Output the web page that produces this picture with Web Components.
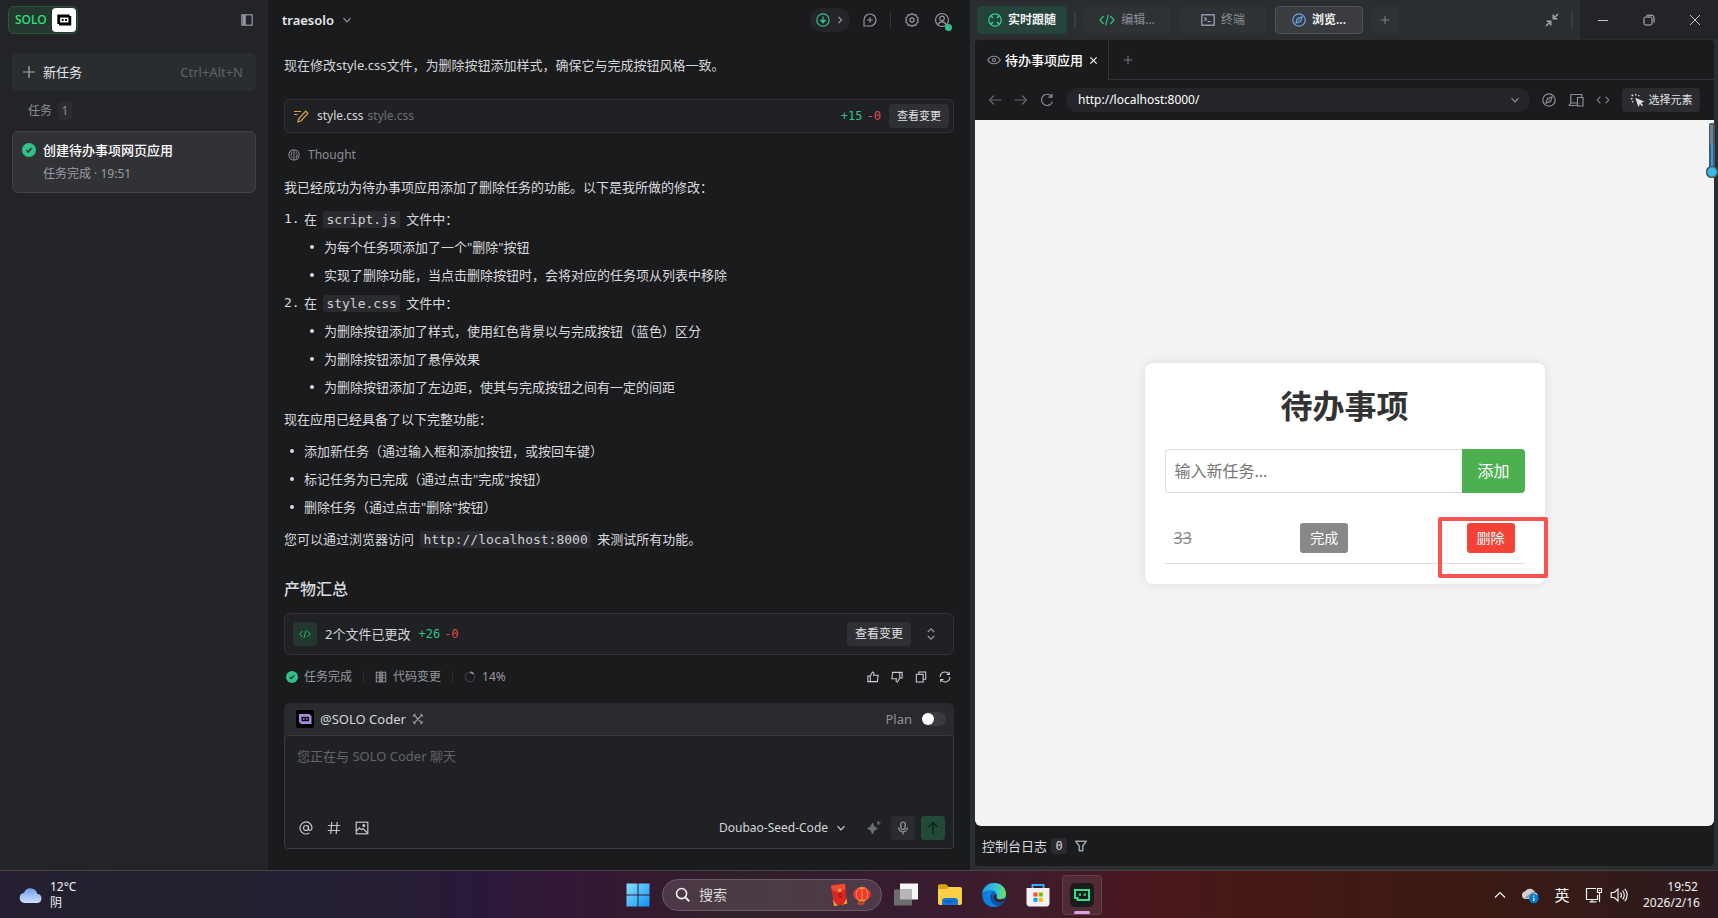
<!DOCTYPE html>
<html lang="zh-CN">
<head>
<meta charset="utf-8">
<title>TRAE SOLO</title>
<style>
  html, body { margin: 0; height: 100%; }
  body {
    background: #1a1b1d; color: #d4d6da;
    font: 13px/20px "Noto Sans", "Noto Sans CJK SC", sans-serif;
    --mono: "DejaVu Sans Mono", "Noto Sans CJK SC", monospace;
    --green: #32c08a; --red: #e5484d; --line: #333438; --muted: #8c8e96;
  }
</style>
</head>
<body>
<app-shell>
  <task-sidebar slot="side"></task-sidebar>
  <chat-pane slot="chat"></chat-pane>
  <work-pane slot="work"></work-pane>
  <desktop-taskbar slot="taskbar"></desktop-taskbar>
</app-shell>

<script>
const RESET = `
  *, *::before, *::after { box-sizing: border-box; }
  button, input, select, textarea { font: inherit; color: inherit; margin: 0; padding: 0; border: 0; background: none; outline: 0; }
  button { display: inline-flex; align-items: center; justify-content: center; cursor: pointer; white-space: nowrap; }
  p, h1, h2, ul, ol { margin: 0; padding: 0; }
  ul, ol { list-style: none; }
`;

class BaseElement extends HTMLElement {
  connectedCallback() {
    if (this.shadowRoot) return;
    const root = this.attachShadow({ mode: 'open' });
    root.innerHTML = `<style>${RESET}${this.styles()}</style>${this.markup()}`;
  }
  styles() { return ':host{display:block}'; }
  markup() { return '<slot></slot>'; }
}

/* Icon set: [viewBox side, body]. Strokes follow currentColor. */
const ICONS = {
  sidebar: [14, '<rect x="1.8" y="1.8" width="10.4" height="10.4"/><path d="M5 2v10M3.4 2v10" stroke-width="1.6"/>'],
  plus: [14, '<path d="M7 1v12M1 7h12"/>'],
  check: [14, '<circle cx="7" cy="7" r="7" fill="currentColor" stroke="none"/><path d="M4.4 7.2l1.8 1.7 3.3-3.6" stroke="#1d2a28" stroke-width="1.5"/>'],
  down: [10, '<path d="M1.5 3.2L5 6.8l3.5-3.6"/>'],
  right: [10, '<path d="M3.4 1.8L6.6 5 3.4 8.2"/>'],
  up: [12, '<path d="M1 8.5l5-5 5 5"/>'],
  updown: [12, '<path d="M2.8 4L6 .9 9.2 4M2.8 8L6 11.1 9.2 8"/>'],
  download: [14, '<circle cx="7" cy="7" r="6.2"/><path d="M7 3.6v6M4.8 7.4L7 9.8l2.2-2.4z" fill="currentColor"/>'],
  newchat: [16, '<path d="M2 14V8a6 6 0 1 1 6 6H2zM8 5.2v5.6M5.2 8h5.6"/>'],
  gear: [16, '<path d="M8 1.6l1.7 1.2 2.1-.1.7 2 1.7 1.2-.6 2.1.6 2.1-1.7 1.2-.7 2-2.1-.1L8 14.4l-1.7-1.2-2.1.1-.7-2-1.7-1.2L2.400 8l-.6-2.100 1.700-1.200.7-2 2.100.1z"/><circle cx="8" cy="8" r="2.100"/>'],
  user: [16, '<circle cx="8" cy="8" r="6.500"/><circle cx="8" cy="6.500" r="2.300"/><path d="M3.800 12.800c.8-2.200 2.300-3 4.200-3s3.400.8 4.200 3"/>'],
  edit: [16, '<path d="M1 3.500h7M1 6.500h3.500M5 13.800l.6-3L12.700 3.200l2.200 2L7.900 13z"/>'],
  thought: [14, '<path d="M7 1.200v11.600M7 1.200C3.500.8.900 3.500 1 7s2.600 6.200 6 5.800c3.400.4 6-2.300 6-5.800S10.500.8 7 1.200M4.200 3.800v2L3 7.600M4.400 10.400V8.600M9.800 10.400v-2L11 6.600M9.600 3.800v1.800"/>'],
  code: [16, '<path d="M4.600 4L1 8l3.600 4M11.400 4L15 8l-3.600 4M9.400 2.600L6.600 13.400"/>'],
  angle: [16, '<path d="M5 4.200L1.500 8 5 11.800M11 4.200L14.500 8 11 11.800"/>'],
  diff: [14, '<path d="M1.500 1.500h4v11h-4zM8.500 1.500h4v11h-4zM7 0v14M2.500 5h2M2.500 8h2M9.500 5h2M9.500 8h2"/>'],
  ring: [14, '<circle cx="7" cy="7" r="5.500" stroke="#3a3b3f" stroke-width="1.600"/><path d="M7 1.500a5.500 5.500 0 0 1 4.300 2.100" stroke-width="1.800"/>'],
  like: [14, '<path d="M1 5.800h2.800v6.600H1zM3.800 5.800L6.400 1.200c1.500 0 1.800 1 1.600 2L7.600 5H13l-.9 7.400H3.800"/>'],
  dislike: [14, '<path d="M13 8.200h-2.800V1.600H13zM10.200 8.200l-2.600 4.600c-1.500 0-1.800-1-1.600-2L6.400 9H1l.9-7.400h8.300"/>'],
  copy: [14, '<path d="M4.500 3.500V1.200h8v8.300h-3M1.500 3.800h8v9h-8z"/>'],
  retry: [14, '<path d="M1.400 7A5.600 5.600 0 0 1 11.600 3.700M12.600 7A5.600 5.600 0 0 1 2.400 10.300M12 .8v3.200H8.800M2 13.200V10h3.200"/>'],
  tools: [14, '<path d="M2 2l10 10M12 2L2 12M1 4l3-3M10 13l3-3M10 1l3 3M1 10l3 3" stroke-width="1.400"/>'],
  at: [14, '<circle cx="7" cy="7" r="2.500"/><path d="M9.500 4.500v3.600c0 1.900 3.500 1.700 3.500-1.300A6 6 0 1 0 10.300 12"/>'],
  hash: [14, '<path d="M4.800 1L3.800 13M10.200 1L9.200 13M1.200 4.500h12M.8 9.500h12"/>'],
  image: [14, '<rect x="1.200" y="1.200" width="11.600" height="11.600"/><path d="M1.500 10l3-3.200 2 2 1.500-1.300L12.500 12"/><circle cx="8.800" cy="4.400" r=".9" fill="currentColor"/>'],
  spark: [16, '<path d="M6.500 3c.6 3.400 1.600 4.800 5 5.500-3.400.7-4.400 2.100-5 5.500-.6-3.400-1.600-4.800-5-5.500 3.400-.7 4.400-2.100 5-5.500z" fill="currentColor"/><path d="M12.500 1v4M10.500 3h4"/>'],
  mic: [14, '<rect x="4.800" y="1" width="4.400" height="7.500" rx="2.200"/><path d="M2.600 6.500a4.400 4.400 0 0 0 8.800 0M7 11v2.400"/>'],
  send: [14, '<path d="M7 13V1.800M2.600 6L7 1.500 11.400 6"/>'],
  follow: [14, '<circle cx="7" cy="7" r="6.200"/><path d="M2.800 2.800L5 5M11.200 2.800L9 5M2.800 11.200L5 9M11.200 11.200L9 9" stroke-width="1.500"/>'],
  terminal: [14, '<rect x=".8" y="1.800" width="12.400" height="10.400"/><path d="M3.400 4.500l2 1.700-2 1.700M6.500 8.500h3.200"/>'],
  compass: [14, '<circle cx="7" cy="7" r="6.200"/><path d="M10 4L8.600 8.600 4 10l1.400-4.600z"/><circle cx="7" cy="7" r=".8" fill="currentColor" stroke="none"/>'],
  collapse: [14, '<path d="M13 1L8.500 5.500M8.300 1.500v4.200h4.200M1 13l4.500-4.500M5.700 12.500V8.300H1.500" stroke-width="1.600"/>'],
  min: [12, '<path d="M1 6.500h10" stroke-width="1"/>'],
  restore: [12, '<rect x="1" y="3" width="8" height="8" rx="1.500" stroke-width="1"/><path d="M3.500 1.200H9A2.200 2.200 0 0 1 11 3.400V8.500" stroke-width="1"/>'],
  close: [12, '<path d="M1 1l10 10M11 1L1 11" stroke-width="1"/>'],
  cross: [10, '<path d="M1.500 1.500l7 7M8.500 1.500l-7 7"/>'],
  eye: [14, '<path d="M.8 7C3.500 2 10.500 2 13.200 7 10.500 12 3.500 12 .8 7z"/><circle cx="7" cy="7" r="1.500"/>'],
  back: [14, '<path d="M13.500 7H1.500M6 2.500L1.500 7 6 11.500"/>'],
  forward: [14, '<path d="M.5 7h12M8 2.500L12.500 7 8 11.500"/>'],
  reload: [14, '<path d="M12.400 8.600A5.600 5.600 0 1 1 11.300 3.200M12 .8v3.400H8.400"/>'],
  devices: [16, '<path d="M2.800 11V2.500h11V5M.8 13.500h8.700M2.800 11L1 13.400M2.800 11H9.500M9.500 5.500H15v8.500H9.500zM12.200 11.500v.5"/>'],
  pick: [16, '<path d="M7 6.500l2.800 8 1.300-3.400 3.400-1.300z" fill="currentColor"/><path d="M11.500 11.500l3 3" stroke-width="1.800"/><path d="M2 2l1.400 1.400M6.500 1v1.800M1 6.500h1.800M10.500 2.500L9.600 3.600M2.500 10.500l1-1" stroke-width="1.600"/>'],
  filter: [14, '<path d="M1 1.500h12L9 7v5.500H5V7z" stroke-width="1.800"/>'],
  bot: [18, '<path d="M3 4h11v1.500h1.500V14H4.500v-1.500H3z" fill="currentColor" stroke="none"/><path d="M5.500 6.800h7.500v4.400H5.500z" fill="var(--hole,#000)" stroke="none"/><path d="M7 8.200h1.600v1.600H7zM10 8.200h1.600v1.600H10z" fill="currentColor" stroke="none"/>'],
  cloud: [24, '<defs><linearGradient id="g" x1="0" y1="0" x2="0" y2="1"><stop offset="0" stop-color="#6f9ff0"/><stop offset="1" stop-color="#cfe1fb"/></linearGradient></defs><path d="M5.500 20A5.200 5.200 0 0 1 5 9.700a7 7 0 0 1 13.300 1.100A4.700 4.700 0 0 1 19 20z" fill="url(#g)" stroke="none"/><path d="M9 12.500l3.200 2.600 5-3.600" stroke="#a8c7f7" stroke-width="2"/>'],
  windows: [24, '<defs><linearGradient id="g" x1="0" y1="0" x2="1" y2="1"><stop offset="0" stop-color="#8be0ff"/><stop offset="1" stop-color="#0a93f5"/></linearGradient></defs><path d="M.5.500h11v11H.5zM12.500.500h11v11h-11zM.5 12.500h11v11H.5zM12.500 12.500h11v11h-11z" fill="url(#g)" stroke="none"/>'],
  search: [16, '<circle cx="7" cy="7" r="5.400" stroke-width="1.700"/><path d="M11 11l4.200 4.200" stroke-width="2"/>'],
  envelope: [24, '<g stroke="none"><path d="M4 2.500l14-1.700 2.200 19.800-13 2.400z" fill="#d9281f"/><path d="M4 2.500l14-1.700.6 5-7 3.600-6.800-2.600z" fill="#f14a33"/><path d="M6 16l2 4 3 2.400-4 .6zM20.200 20.600l-.6-5-2.600 5-3 1.300zM11 6l3-.5.4 3-3 .4z" fill="#f6a33a"/><path d="M11.500 11.500l3-.3M11.800 14l3-.3" stroke="#7b1510"/></g>'],
  lantern: [24, '<path d="M12 0v4M9 18l-2 5h7l1-5" stroke="#c9502c" stroke-width="1.200" fill="#b23a2b"/><ellipse cx="12" cy="11" rx="10.500" ry="8" fill="#ee3b2c" stroke="none"/><path d="M12 3v16M7.500 4c-3 4-3 10 0 14M16.500 4c3 4 3 10 0 14" stroke="#ff9a50" stroke-width="1"/><path d="M8 3.500h8M8 18.500h8" stroke="#e7a13c" stroke-width="1.800"/>'],
  taskview: [24, '<g stroke="none"><path d="M6 .5h18v16H6z" fill="#f6f6f6"/><path d="M0 6.500h18v16H0z" fill="#6d6d6d"/><path d="M6 6.500h12v10H6z" fill="#b7b7b7"/></g>'],
  folder: [24, '<g stroke="none"><path d="M0 3.500C0 2 .8 1.200 2 1.200h6L11 4v4H0z" fill="#dfa20c"/><path d="M0 6h9l2-2h11c1.200 0 2 .8 2 2v14c0 1.200-.8 2-2 2H2c-1.200 0-2-.8-2-2z" fill="#fdcf48"/><path d="M4 22v-4c0-2 1-3 3-3h10c2 0 3 1 3 3v4z" fill="#1577d4"/><path d="M7 18.500h10" stroke="#0c5aa8" stroke-width="1.500"/></g>'],
  edge: [24, '<defs><linearGradient id="g" x1="0" y1=".3" x2="1" y2=".4"><stop offset="0" stop-color="#1f9bea"/><stop offset=".6" stop-color="#35c8cf"/><stop offset="1" stop-color="#6be05a"/></linearGradient></defs><g stroke="none"><circle cx="12" cy="12" r="12" fill="#1273cf"/><path d="M.3 10C1.500 4 6 0 12 0c7 0 12 5 12 10.500 0 4-3 6-6.200 6-2.600 0-3.800-1-3.300-2 1.600-3.500-.8-7-4.500-7C5.500 7.500 1 9 .3 10z" fill="url(#g)"/><path d="M10 7.500C4 8 0 13 2.500 18.500 5 23 11 25 16.500 23 11 22.500 7.500 18 8.500 13c.4-2.500 1.500-4 3-5z" fill="#0e83dc"/><path d="M9 11c-2 5 1 11 7.500 12 3-1 5-3 6-5-6 3.500-13 0-12-5 .3-1.600 1-2.600 2-3.200C11 9 9.700 9.400 9 11z" fill="#0c4f9e"/><path d="M14.800 12.500c.3 1.200-.8 2-.3 2.800 1 1.300 4.500 1.700 7 .1l1.800 1.700-3 1.700c-4 1.300-9-.8-9-4.800 0-2 1.500-3.500 3.500-1.500z" fill="#3a1b28"/></g>'],
  store: [24, '<path d="M6.500 6V2h11v4" stroke="#2db0f5" stroke-width="2"/><path d="M.5 5h23v15c0 2-1.200 3.500-3 3.500h-17c-1.800 0-3-1.500-3-3.500z" fill="#f1f1f1" stroke="none"/><g stroke="none"><path d="M7.500 9.500h4v4h-4z" fill="#f25022"/><path d="M12.800 9.500h4v4h-4z" fill="#7fba00"/><path d="M7.500 14.800h4v4h-4z" fill="#00a4ef"/><path d="M12.800 14.800h4v4h-4z" fill="#ffb900"/></g>'],
  trae: [24, '<rect width="24" height="24" rx="5" fill="#191b1d" stroke="none"/><path d="M5 7h14v10H7.500v-2H5z" stroke="#32e08a" stroke-width="2"/><path d="M8.800 10.500h2.200v2.200H8.800zM13.600 10.500h2.200v2.200h-2.200z" fill="#32e08a" stroke="none"/>'],
  onedrive: [18, '<path d="M4 13a4 4 0 0 1 .2-7.800A5.500 5.500 0 0 1 14 6.500a3.300 3.300 0 0 1 0 6.500z" fill="#cfcfcf" stroke="none"/><path d="M5 12l9-6.500" stroke="#8f8f8f" stroke-width="1.600"/><circle cx="12.800" cy="12.500" r="4.800" fill="#0078d4" stroke="none"/><path d="M12.800 11.800v3.200M12.800 9.600v1.200" stroke="#fff" stroke-width="1.300"/>'],
  network: [18, '<path d="M11 2.500H1.500v11h11V9M4.500 15.800h7M7 13.500v2M12.500 2.500h4v4h-4zM14.500 6.500V16M13.800 4.500h1.400" stroke-width="1.200"/>'],
  volume: [18, '<path d="M1.200 6.500h3L8 3v12l-3.800-3.500h-3zM10.500 6.500a4 4 0 0 1 0 5M12.600 4.600a6.500 6.500 0 0 1 0 8.800M14.700 2.800a9 9 0 0 1 0 12.400" stroke-width="1.200"/>'],
};

customElements.define('ui-icon', class extends BaseElement {
  styles() {
    const s = this.getAttribute('size') || 14;
    return `:host{display:inline-flex;flex:none;width:${s}px;height:${s}px} svg{display:block;width:100%;height:100%}`;
  }
  markup() {
    const [box, body] = ICONS[this.getAttribute('name')];
    return `<svg viewBox="0 0 ${box} ${box}" fill="none" stroke="currentColor" stroke-width="1.2" aria-hidden="true">${body}</svg>`;
  }
});

customElements.define('app-shell', class extends BaseElement {
  styles() { return `
    :host { display: flex; flex-direction: column; min-height: 100vh; }
    .panes { flex: 1; display: grid; grid-template-columns: 268px minmax(0, 702fr) minmax(0, 748fr); }
    ::slotted(*) { min-width: 0; }`; }
  markup() { return `<div class="panes"><slot name="side"></slot><slot name="chat"></slot><slot name="work"></slot></div><slot name="taskbar"></slot>`; }
});

customElements.define('task-sidebar', class extends BaseElement {
  styles() { return `
    :host { display: block; background: #232428; }
    header { display: flex; height: 40px; align-items: center; justify-content: space-between; padding: 0 14px 0 8px; color: #9498a3; }
    .solo { height: 28px; padding: 0 1px 0 6px; gap: 5px; border: 1px solid #31513f; border-radius: 6px; background: #23392f; color: #32e07c; font-size: 12px; font-weight: 500; }
    .knob { display: grid; place-items: center; width: 24px; height: 24px; border-radius: 4px; background: #fff; color: #000; --hole: #fff; }
    .body { padding: 13px 12px; }
    .new { display: flex; width: 100%; height: 38px; padding: 0 13px 0 10px; justify-content: flex-start; gap: 7px; border-radius: 6px; background: #2a2d2f; color: #e6e7ea; }
    .new kbd { font: inherit; margin-left: auto; color: #5f626b; }
    .new ui-icon { color: #a9abb2; }
    .label { display: flex; align-items: center; gap: 6px; height: 40px; padding-left: 16px; font-size: 12px; color: var(--muted); }
    .label b { font-weight: 400; width: 14px; line-height: 18px; border-radius: 3px; background: #2b2c30; text-align: center; }
    .task { display: grid; grid-template-columns: 14px 1fr; column-gap: 7px; row-gap: 4px; align-items: center; justify-items: start; width: 100%; height: 62px; padding: 8px 9px; border: 1px solid #424347; border-radius: 6px; background: #313236; color: #fff; font-weight: 500; }
    .task ui-icon { color: var(--green); }
    .task small { grid-column: 2; font-size: 12px; font-weight: 400; color: #9a9ca4; }`; }
  markup() { return `
    <header>
      <button class="solo" role="switch" aria-checked="true"><span>SOLO</span><span class="knob"><ui-icon name="bot" size="20"></ui-icon></span></button>
      <button aria-label="侧栏"><ui-icon name="sidebar"></ui-icon></button>
    </header>
    <div class="body">
      <button class="new"><ui-icon name="plus"></ui-icon><span>新任务</span><kbd>Ctrl+Alt+N</kbd></button>
      <div class="label"><span>任务</span><b>1</b></div>
      <button class="task"><ui-icon name="check"></ui-icon><span>创建待办事项网页应用</span><small>任务完成 · 19:51</small></button>
    </div>`; }
});

/* Rounded bordered row used for file changes and the summary. */
customElements.define('file-card', class extends BaseElement {
  styles() { return `
    :host { display: flex; align-items: center; gap: 8px; height: 34px; padding: 0 4px 0 8px; border: 1px solid var(--line); border-radius: 6px; background: #202124; font-size: 12px; box-sizing: border-box; }
    :host([large]) { height: 42px; padding-right: 16px; font-size: 13px; }
    .stat { display: flex; font: 500 12px/20px var(--mono); color: var(--green); gap: 4px; }
    .stat i { font-style: normal; color: var(--red); }
    :host(:not([large])) .stat { margin-left: auto; }
    button { height: 24px; padding: 0 8px; border-radius: 4px; background: #2f3034; font-size: 11px; color: #e1e2e5; }
    :host([large]) button { margin-left: auto; font-size: 12px; }`; }
  markup() { return `<slot></slot><span class="stat"><span>${this.getAttribute('added')}</span><i>-0</i></span><button>查看变更</button><slot name="end"></slot>`; }
});

customElements.define('chat-message', class extends BaseElement {
  styles() { return `
    :host { display: block; color: #d9dadd; }
    p, .outline, .plain { margin-bottom: 12px; }
    code { font: 500 13px/17px var(--mono); background: #2a2b2f; border-radius: 3px; padding: 1px 3px; margin: 0 3px; color: #d0d2d6; }
    li { display: grid; grid-template-columns: 20px minmax(0, 1fr); margin-bottom: 8px; line-height: 20px; }
    li > ul { grid-column: 2; margin-top: 8px; }
    ul > li::before { content: ""; width: 4px; height: 4px; margin: 8px 0 0 6px; border-radius: 50%; background: currentColor; }
    li:last-child { margin-bottom: 0; }
    .n { font-family: var(--mono); }
    p:last-child { margin-bottom: 0; }
    h2 { font-size: 16px; line-height: 24px; font-weight: 500; margin: 28px 0 12px; }`; }
  markup() { return `
    <p>我已经成功为待办事项应用添加了删除任务的功能。以下是我所做的修改：</p>
    <ol class="outline">
      <li><span class="n">1.</span><span>在 <code>script.js</code> 文件中：</span>
        <ul><li><span>为每个任务项添加了一个"删除"按钮</span></li><li><span>实现了删除功能，当点击删除按钮时，会将对应的任务项从列表中移除</span></li></ul></li>
      <li><span class="n">2.</span><span>在 <code>style.css</code> 文件中：</span>
        <ul><li><span>为删除按钮添加了样式，使用红色背景以与完成按钮（蓝色）区分</span></li><li><span>为删除按钮添加了悬停效果</span></li><li><span>为删除按钮添加了左边距，使其与完成按钮之间有一定的间距</span></li></ul></li>
    </ol>
    <p>现在应用已经具备了以下完整功能：</p>
    <ul class="plain"><li><span>添加新任务（通过输入框和添加按钮，或按回车键）</span></li><li><span>标记任务为已完成（通过点击"完成"按钮）</span></li><li><span>删除任务（通过点击"删除"按钮）</span></li></ul>
    <p>您可以通过浏览器访问 <code>http://localhost:8000</code> 来测试所有功能。</p>
    <h2>产物汇总</h2>`; }
});

customElements.define('chat-composer', class extends BaseElement {
  styles() { return `
    :host { display: block; border-radius: 6px; background: #292a2d; }
    .head { display: flex; align-items: center; height: 32px; padding: 0 8px 0 12px; gap: 6px; }
    .bot { display: grid; place-items: center; width: 18px; height: 18px; border-radius: 2px; background: #000; color: #a78bdf; }
    .head ui-icon[name=tools] { color: #9a9ca4; }
    label { display: flex; align-items: center; gap: 10px; margin-left: auto; color: #8f9198; }
    input { appearance: none; width: 24px; height: 14px; border-radius: 7px; background: #3a3b3f; }
    input::before { content: ""; display: block; width: 12px; height: 12px; margin: 1px 0; border-radius: 50%; background: #fff; }
    .box { height: 114px; display: flex; flex-direction: column; border: 1px solid #3a3b3f; border-radius: 4px; background: #202124; padding: 10px 8px 8px 12px; }
    textarea { flex: 1; width: 100%; resize: none; line-height: 20px; display: block; }
    textarea::placeholder { color: #62646c; opacity: 1; }
    .tools { display: flex; align-items: center; height: 24px; }
    .left { display: flex; gap: 14px; padding-left: 2px; color: #c4c6cb; }
    .model { display: flex; align-items: center; margin-left: auto; font-size: 12px; gap: 7px; margin-right: 16px; }
    select { appearance: none; }
    .act { width: 24px; height: 24px; border-radius: 4px; margin-left: 6px; background: #2b2c30; color: #9a9ca4; }
    .plain { background: none; color: #6c6e76; margin: 0 -1px 0 0; }
    .send { background: #224a37; color: #0f1f18; }`; }
  markup() { return `
    <div class="head"><span class="bot"><ui-icon name="bot" size="18"></ui-icon></span><span>@SOLO Coder</span><ui-icon name="tools" size="12"></ui-icon><label>Plan <input type="checkbox" role="switch"></label></div>
    <div class="box">
      <textarea aria-label="消息" placeholder="您正在与 SOLO Coder 聊天"></textarea>
      <div class="tools">
        <div class="left"><button aria-label="提及"><ui-icon name="at"></ui-icon></button><button aria-label="标签"><ui-icon name="hash"></ui-icon></button><button aria-label="图片"><ui-icon name="image"></ui-icon></button></div>
        <span class="model"><select aria-label="模型"><option>Doubao-Seed-Code</option></select><ui-icon name="down" size="10"></ui-icon></span>
        <button class="act plain" aria-label="优化"><ui-icon name="spark" size="16"></ui-icon></button>
        <button class="act" aria-label="语音"><ui-icon name="mic"></ui-icon></button>
        <button class="act send" aria-label="发送"><ui-icon name="send"></ui-icon></button>
      </div>
    </div>`; }
});

customElements.define('chat-pane', class extends BaseElement {
  styles() { return `
    :host { display: flex; flex-direction: column; background: #1a1b1d; padding: 0 16px 21px; }
    header { display: flex; align-items: center; height: 40px; margin: 0 -3px 15px -2px; color: #96989f; }
    .title { gap: 8px; margin-right: auto; font-weight: 600; color: #e8e9eb; }
    .title ui-icon, .pill ui-icon + ui-icon { color: #96989f; }
    .pill { width: 40px; height: 24px; gap: 5px; border-radius: 12px; background: #242529; color: var(--green); }
    .ib { width: 30px; height: 24px; position: relative; }
    .ib i { position: absolute; right: 5px; bottom: 1px; width: 7px; height: 7px; border-radius: 50%; background: var(--green); }
    hr { width: 1px; height: 18px; margin: 0 6px 0 5px; border: 0; background: #35363a; }
    .file { margin: 24px 0 12px; }
    .file em { font-style: normal; color: #6c6e76; margin-left: -4px; }
    .thought { display: flex; align-items: center; gap: 8px; padding-left: 4px; margin-bottom: 12px; font-size: 12px; color: #8c8e96; }
    .badge { display: grid; place-items: center; width: 24px; height: 24px; border-radius: 4px; background: #22382f; color: #2fbf77; }
    .status { display: flex; align-items: center; height: 20px; margin: 12px 0 16px; padding: 0 3px 0 2px; font-size: 12px; color: #96989f; }
    .status > span { display: flex; align-items: center; gap: 6px; }
    .status hr { height: 12px; margin: 0 11px; background: #2c2d31; }
    .acts { display: flex; gap: 12px; margin-left: auto; color: #d0d1d5; }
    chat-composer { margin-top: auto; }`; }
  markup() { return `
    <header>
      <button class="title">traesolo <ui-icon name="down" size="10"></ui-icon></button>
      <button class="pill" aria-label="更新"><ui-icon name="download"></ui-icon><ui-icon name="right" size="10"></ui-icon></button>
      <button class="ib" style="margin-left:5px" aria-label="新对话"><ui-icon name="newchat" size="16"></ui-icon></button>
      <hr>
      <button class="ib" aria-label="设置"><ui-icon name="gear" size="16"></ui-icon></button>
      <button class="ib" aria-label="账户"><ui-icon name="user" size="16"></ui-icon><i></i></button>
    </header>
    <p>现在修改style.css文件，为删除按钮添加样式，确保它与完成按钮风格一致。</p>
    <file-card class="file" added="+15"><ui-icon name="edit" size="16" style="color:#d9a441"></ui-icon><span>style.css</span><em>style.css</em></file-card>
    <div class="thought"><ui-icon name="thought" size="12"></ui-icon><span>Thought</span></div>
    <chat-message></chat-message>
    <file-card large added="+26"><span class="badge"><ui-icon name="code" size="12"></ui-icon></span><span>2个文件已更改</span><button slot="end" aria-label="展开" style="all:unset;display:flex;margin-left:6px;color:#96989f"><ui-icon name="updown" size="12"></ui-icon></button></file-card>
    <div class="status">
      <span><ui-icon name="check" size="12" style="color:#32c08a"></ui-icon>任务完成</span><hr>
      <span><ui-icon name="diff" size="12"></ui-icon>代码变更</span><hr>
      <span><ui-icon name="ring" size="12"></ui-icon>14%</span>
      <div class="acts"><button aria-label="赞"><ui-icon name="like" size="12"></ui-icon></button><button aria-label="踩"><ui-icon name="dislike" size="12"></ui-icon></button><button aria-label="复制"><ui-icon name="copy" size="12"></ui-icon></button><button aria-label="重试"><ui-icon name="retry" size="12"></ui-icon></button></div>
    </div>
    <chat-composer></chat-composer>`; }
});

customElements.define('todo-card', class extends BaseElement {
  styles() { return `
    :host { display: block; width: 400px; box-sizing: border-box; padding: 20px; border-radius: 8px; background: #fff; color: #333; box-shadow: 0 0 10px rgba(0,0,0,.1); font: 16px/24px "Noto Sans", "Noto Sans CJK SC", sans-serif; }
    h1 { margin-bottom: 20px; font-size: 32px; line-height: 46px; font-weight: 700; text-align: center; }
    form { display: flex; margin-bottom: 20px; }
    input { flex: 1; min-width: 0; height: 44px; padding: 0 9px; border: 1px solid #ddd; border-right: 0; border-radius: 4px 0 0 4px; }
    input::placeholder { color: #757575; opacity: 1; }
    form button { height: 44px; padding: 0 15px; border-radius: 0 4px 4px 0; background: #4caf50; color: #fff; }
    li { position: relative; display: flex; align-items: center; justify-content: space-between; padding: 10px 10px 10px 9px; border-bottom: 1px solid #ddd; }
    s { color: #888; }
    li button { height: 30px; padding: 0 10px; border-radius: 3px; background: #888; color: #fff; font-size: 14px; }
    li .del { margin-left: 10px; background: #f44336; text-decoration: line-through #888; }
    .mark { position: absolute; top: 4px; right: -23px; width: 110px; height: 61px; border: 4px solid #fb5252; border-radius: 2px; pointer-events: none; }`; }
  markup() { return `
    <h1>待办事项</h1>
    <form onsubmit="return false"><input type="text" aria-label="新任务" placeholder="输入新任务..."><button>添加</button></form>
    <ul><li><s>33</s><button>完成</button><button class="del">删除</button><span class="mark"></span></li></ul>`; }
});

customElements.define('work-pane', class extends BaseElement {
  styles() { return `
    :host { display: flex; flex-direction: column; background: #2b2e30; }
    .top { display: flex; align-items: center; height: 40px; padding-left: 7px; }
    .tab { height: 28px; width: 88px; gap: 6px; border-radius: 4px; background: #2f3235; color: #8c8e96; font-size: 12px; margin-right: 8px; }
    .follow { width: 90px; margin-right: 7px; background: #24433a; color: #f0f1f2; font-weight: 600; }
    .follow ui-icon { color: #35d491; }
    .on { border: 1px solid #505256; background: #3a3c40; color: #f0f1f2; font-weight: 600; }
    .on ui-icon { color: #68a5ee; }
    .tab.add { width: 28px; margin-right: auto; }
    .bar { width: 2px; height: 16px; background: #393b3f; margin-right: 7px; }
    .fold { color: #a0a2aa; margin-right: 12px; }
    .top .last { margin-right: 7px; }
    .win { display: flex; align-self: flex-start; height: 39px; background: #232428; color: #c4c5c9; }
    .win button { width: 46px; }
    .frame { flex: 1; display: flex; flex-direction: column; margin: 0 4px 4px 5px; border-radius: 4px; overflow: hidden; background: #1a1b1d; }
    .pages { display: flex; height: 40px; color: #fff; }
    .page { display: flex; align-items: center; width: 134px; padding: 0 10px 0 12px; gap: 4px; border-right: 1px solid var(--line); white-space: nowrap; font-weight: 500; }
    .page ui-icon[name=eye] { color: #8c8e96; }
    .page button { margin-left: auto; }
    .rest { flex: 1; display: flex; align-items: center; padding-left: 14px; border-bottom: 1px solid var(--line); color: #8c8e96; }
    .nav { display: flex; align-items: center; height: 40px; padding: 0 14px 0 13px; gap: 12px; color: #8c8e96; }
    .url { flex: 1; display: flex; align-items: center; height: 24px; padding: 0 10px 0 12px; border-radius: 12px; background: #242528; }
    .url input { flex: 1; min-width: 0; font-size: 12px; color: #fff; }
    .dim { color: #65676e; }
    .pick { width: 78px; height: 24px; gap: 5px; border-radius: 4px; background: #2b2c30; color: #e1e2e5; font-size: 11px; }
    .view { flex: 1; display: grid; place-items: center; background: #f3f3f3; border-radius: 0 0 6px 6px; }
    .log { display: flex; align-items: center; height: 40px; padding-left: 7px; gap: 8px; color: #d9dadd; }
    .log b { width: 16px; margin: 0 0 0 -4px; border-radius: 3px; background: #2a2b2f; font: 12px/16px var(--mono); text-align: center; }
    .log ui-icon { color: #9aa0ad; }
    .gauge { position: absolute; right: 0; top: 122px; width: 12px; height: 56px; }`; }
  markup() { return `
    <div class="top">
      <button class="tab follow"><ui-icon name="follow"></ui-icon>实时跟随</button><span class="bar"></span>
      <button class="tab"><ui-icon name="code" size="16" style="color:#32c07f"></ui-icon>编辑...</button>
      <button class="tab"><ui-icon name="terminal" style="color:#a5abc0"></ui-icon>终端</button>
      <button class="tab on"><ui-icon name="compass"></ui-icon>浏览...</button>
      <button class="tab add" aria-label="添加面板"><ui-icon name="plus" size="10"></ui-icon></button>
      <button class="fold" aria-label="收起"><ui-icon name="collapse"></ui-icon></button><span class="bar last"></span>
      <div class="win"><button aria-label="最小化"><ui-icon name="min" size="12"></ui-icon></button><button aria-label="还原"><ui-icon name="restore" size="12"></ui-icon></button><button aria-label="关闭"><ui-icon name="close" size="12"></ui-icon></button></div>
    </div>
    <div class="frame">
      <div class="pages"><div class="page"><ui-icon name="eye"></ui-icon><span>待办事项应用</span><button aria-label="关闭标签页"><ui-icon name="cross" size="9"></ui-icon></button></div><div class="rest"><button aria-label="新标签页"><ui-icon name="plus" size="10"></ui-icon></button></div></div>
      <div class="nav">
        <button class="dim" aria-label="后退"><ui-icon name="back"></ui-icon></button><button class="dim" aria-label="前进"><ui-icon name="forward"></ui-icon></button><button aria-label="刷新"><ui-icon name="reload"></ui-icon></button>
        <div class="url"><input type="text" aria-label="地址" value="http://localhost:8000/"><ui-icon name="down" size="10"></ui-icon></div>
        <button aria-label="浏览器"><ui-icon name="compass"></ui-icon></button><button aria-label="设备"><ui-icon name="devices" size="16"></ui-icon></button><button aria-label="源代码"><ui-icon name="angle"></ui-icon></button>
        <button class="pick"><ui-icon name="pick" size="14"></ui-icon>选择元素</button>
      </div>
      <div class="view"><todo-card></todo-card></div>
      <div class="log"><span>控制台日志</span><b>0</b><ui-icon name="filter" size="12"></ui-icon></div>
    </div>
    <svg class="gauge" viewBox="0 0 12 56" aria-hidden="true"><rect x="3" y="1" width="6" height="50" rx="2" fill="#455a66"/><rect x="4" y="3" width="3" height="20" fill="#70808a"/><rect x="5" y="23" width="2" height="24" fill="#1fa3ea"/><circle cx="6" cy="50" r="5.500" fill="#37b9ea" stroke="#46545e" stroke-width="1.500"/></svg>`; }
});

customElements.define('desktop-taskbar', class extends BaseElement {
  styles() { return `
    :host { display: grid; grid-template-columns: 1fr auto 1fr; align-items: center; height: 48px; box-sizing: border-box; border-top: 1px solid #4a4048; color: #f2f2f2; font-size: 12px; line-height: 16px;
      background: linear-gradient(90deg, #261f31 0, #21202f 10%, #241e31 20%, #291939 28%, #331737 32%, #35192f 37%, #30212a 43%, #371c30 52%, #3e1c2c 60%, #49171e 66%, #451815 73%, #3c1912 84%, #341a18 93%, #2f1a20 100%); }
    .weather { justify-self: start; margin-left: 12px; padding: 0 7px; gap: 7px; text-align: left; }
    .weather span, .clock span { display: block; }
    .mid { display: flex; align-items: center; }
    .app { position: relative; width: 44px; height: 40px; border-radius: 4px; }
    .active { width: 40px; margin-left: 2px; border: 1px solid #63404b; background: #ffffff14; }
    .active::after { content: ""; position: absolute; bottom: 0; width: 16px; height: 3px; border-radius: 2px; background: #dda0e8; }
    .search { display: flex; align-items: center; width: 220px; height: 32px; margin: 0 2px; padding: 0 9px 0 12px; gap: 9px; border: 1px solid #6b5a66; border-radius: 16px; background: #ffffff20; }
    .search input { flex: 1; min-width: 0; font-size: 14px; line-height: 20px; }
    .search input::placeholder { color: #dcd8da; opacity: 1; }
    .search ui-icon + ui-icon { margin-left: -6px; }
    .tray { justify-self: end; display: flex; align-items: center; gap: 15px; padding-right: 20px; }
    .tray .ime { font-size: 15px; width: 16px; }
    .sys { gap: 7px; }
    .clock { display: block; width: 55px; text-align: right; }`; }
  markup() { return `
    <button class="weather"><ui-icon name="cloud" size="24"></ui-icon><span><span>12°C</span><span>阴</span></span></button>
    <div class="mid">
      <button class="app" aria-label="开始"><ui-icon name="windows" size="24"></ui-icon></button>
      <div class="search"><ui-icon name="search" size="15"></ui-icon><input type="search" aria-label="搜索" placeholder="搜索"><ui-icon name="envelope" size="24"></ui-icon><ui-icon name="lantern" size="20" style="margin-left:-8px"></ui-icon></div>
      <button class="app" aria-label="任务视图"><ui-icon name="taskview" size="24"></ui-icon></button>
      <button class="app" aria-label="文件资源管理器"><ui-icon name="folder" size="24"></ui-icon></button>
      <button class="app" aria-label="Edge"><ui-icon name="edge" size="24"></ui-icon></button>
      <button class="app" aria-label="Store"><ui-icon name="store" size="24"></ui-icon></button>
      <button class="app active" aria-label="TRAE"><ui-icon name="trae" size="24"></ui-icon></button>
    </div>
    <div class="tray">
      <button aria-label="显示隐藏的图标"><ui-icon name="up" size="12"></ui-icon></button>
      <button aria-label="OneDrive"><ui-icon name="onedrive" size="18"></ui-icon></button>
      <button class="ime">英</button>
      <button class="sys" aria-label="网络和声音"><ui-icon name="network" size="18"></ui-icon><ui-icon name="volume" size="18"></ui-icon></button>
      <button class="clock"><span>19:52</span><span>2026/2/16</span></button>
    </div>`; }
});
</script>
</body>
</html>
